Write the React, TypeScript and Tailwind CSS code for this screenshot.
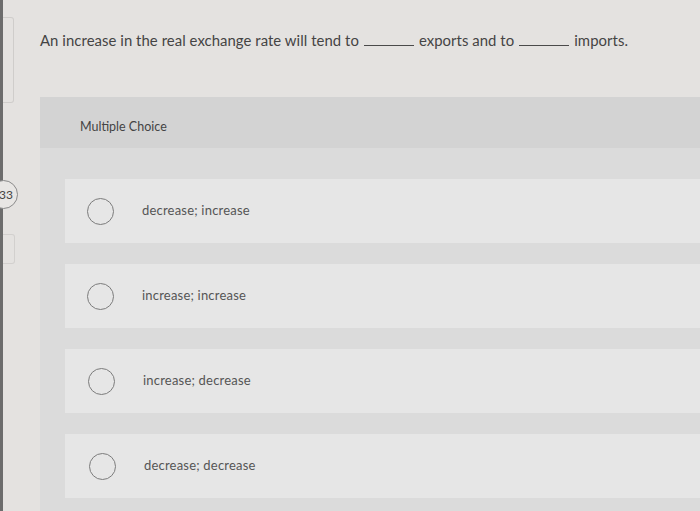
import React from 'react';

const options = ['decrease; increase', 'increase; increase', 'increase; decrease', 'decrease; decrease'];

const Blank: React.FC = () => (
  <span className="inline-block w-[50px] h-[1px] bg-[#4a4a4a] mx-[5px] align-baseline" />
);

const App: React.FC = () => {
  return (
    <div className="flex w-[700px] h-[511px] overflow-hidden bg-[#e4e2e0] font-['Lato','Open_Sans',sans-serif]">
      <div className="w-[3px] bg-[#6c6c6c] shrink-0" />

      <div className="w-[37px] shrink-0 flex flex-col">
        <div className="mt-[17px] w-[11px] h-[86px] border border-l-0 border-[#cfcdcb] rounded-r-[3px]" />
        <div className="mt-[77px] -ml-[14px] w-[29px] h-[29px] rounded-full border border-[#8a8a8a] bg-[#e8e6e4] flex items-center justify-end pr-[4px] text-[12px] text-[#444]">
          33
        </div>
        <div className="mt-[25px] w-[12px] h-[30px] border border-l-0 border-[#d2d0ce] rounded-r-[3px]" />
      </div>

      <div className="flex-1 flex flex-col">
        <p className="pt-[29px] h-[97px] text-[14.9px] text-[#444] tracking-[0.05px] whitespace-nowrap">
          An increase in the real exchange rate will tend to
          <Blank />
          exports and to
          <Blank />
          imports.
        </p>

        <div className="flex-1 flex flex-col bg-[#dbdbdb]">
          <div className="h-[51px] bg-[#d3d3d3] pl-[40px] pt-[9px] flex items-center text-[12.5px] text-[#444]">
            Multiple Choice
          </div>
          <div className="flex flex-col gap-[21px] pt-[31px] pl-[25px]">
            {options.map((opt, i) => (
              <div key={opt} className="h-[64px] bg-[#e6e6e6] flex items-center pl-[22px]">
                <span
                  className={`w-[27px] h-[27px] rounded-full border-[1.5px] border-[#7c7c7c] shrink-0 ${
                    i < 2 ? 'ml-0' : i === 2 ? 'ml-[1px]' : 'ml-[2px]'
                  }`}
                />
                <span className="ml-[28px] text-[13px] text-[#555] tracking-[0.2px]">{opt}</span>
              </div>
            ))}
          </div>
        </div>
      </div>
    </div>
  );
};

export default App;
